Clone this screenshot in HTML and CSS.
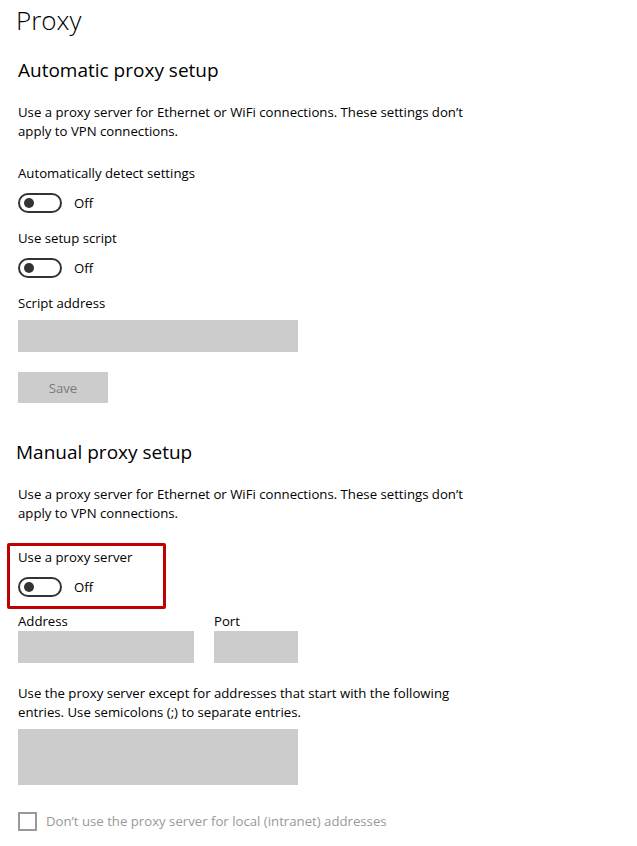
FILE: index.html
```html
<!DOCTYPE html>
<html lang="en">
<head>
  <meta charset="UTF-8" />
  <title>Proxy</title>
  <link rel="stylesheet" href="styles.css">
</head>
<body>
  <div class="page">
    <h1 class="title">Proxy</h1>

    <h2 class="section">Automatic proxy setup</h2>
    <p class="desc">Use a proxy server for Ethernet or WiFi connections. These settings don’t apply to VPN connections.</p>

    <div class="label first">Automatically detect settings</div>
    <div class="toggle-row">
      <span class="toggle"><span class="knob"></span></span>
      <span class="state">Off</span>
    </div>

    <div class="label">Use setup script</div>
    <div class="toggle-row">
      <span class="toggle"><span class="knob"></span></span>
      <span class="state">Off</span>
    </div>

    <div class="label">Script address</div>
    <div class="field script-field"></div>

    <button class="save" disabled>Save</button>

    <h2 class="section manual">Manual proxy setup</h2>
    <p class="desc">Use a proxy server for Ethernet or WiFi connections. These settings don’t apply to VPN connections.</p>

    <div class="highlight">
      <div class="label inner">Use a proxy server</div>
      <div class="toggle-row">
        <span class="toggle"><span class="knob"></span></span>
        <span class="state">Off</span>
      </div>
    </div>

    <div class="addr-row">
      <div class="addr-col">
        <div class="label tight">Address</div>
        <div class="field addr-field"></div>
      </div>
      <div class="port-col">
        <div class="label tight">Port</div>
        <div class="field port-field"></div>
      </div>
    </div>

    <p class="desc except">Use the proxy server except for addresses that start with the following entries. Use semicolons (;) to separate entries.</p>
    <div class="field except-field"></div>

    <label class="check-row">
      <span class="checkbox"></span>
      <span class="check-text">Don’t use the proxy server for local (intranet) addresses</span>
    </label>
  </div>
</body>
</html>
```

FILE: styles.css
```css
body {
  margin: 0;
  background: #fff;
  color: #000;
  font-family: "Open Sans", "Noto Sans", sans-serif;
  font-size: 13.2px;
}
.page {
  padding-left: 18px;
}
.title {
  margin: 0 0 0 -2px;
  font-size: 26px;
  font-weight: 300;
  line-height: 40px;
}
.section {
  margin: 16px 0 0 0;
  font-size: 19px;
  font-weight: 400;
  line-height: 28px;
}
.section.manual {
  margin-top: 35px;
  margin-left: -2px;
}
.desc {
  width: 460px;
  margin: 19px 0 0 0;
  line-height: 19px;
}
.label {
  line-height: 19px;
  margin-top: 16px;
}
.label.first {
  margin-top: 23px;
}
.toggle-row {
  display: flex;
  align-items: center;
  gap: 12px;
  margin-top: 10px;
  height: 20px;
}
.toggle {
  box-sizing: border-box;
  width: 44px;
  height: 20px;
  border: 2px solid #333;
  border-radius: 10px;
  display: flex;
  align-items: center;
  padding-left: 4px;
}
.knob {
  width: 10px;
  height: 10px;
  border-radius: 50%;
  background: #333;
}
.state {
  line-height: 19px;
}
.field {
  background: #ccc;
  height: 32px;
}
.script-field {
  width: 280px;
  margin-top: 7px;
}
.save {
  display: block;
  margin-top: 20px;
  width: 90px;
  height: 31px;
  border: none;
  background: #ccc;
  color: #7a7a7a;
  font-family: inherit;
  font-size: 13.2px;
  padding: 0;
}
.highlight {
  box-sizing: border-box;
  width: 159px;
  margin: 20px 0 0 -11px;
  padding: 2px 0 9px 8px;
  border: 3px solid #c00000;
  border-radius: 2px;
}
.label.inner {
  margin-top: 0;
}
.addr-row {
  display: flex;
  gap: 20px;
  margin-top: 3px;
}
.label.tight {
  margin-top: 0;
}
.addr-field {
  width: 176px;
}
.port-field {
  width: 84px;
}
.desc.except {
  margin-top: 21px;
}
.except-field {
  width: 280px;
  height: 56px;
  margin-top: 7px;
}
.check-row {
  display: flex;
  align-items: center;
  gap: 9px;
  margin-top: 27px;
  color: #999;
}
.checkbox {
  box-sizing: border-box;
  width: 19px;
  height: 19px;
  border: 2px solid #999;
}
.check-text {
  line-height: 19px;
}
```
